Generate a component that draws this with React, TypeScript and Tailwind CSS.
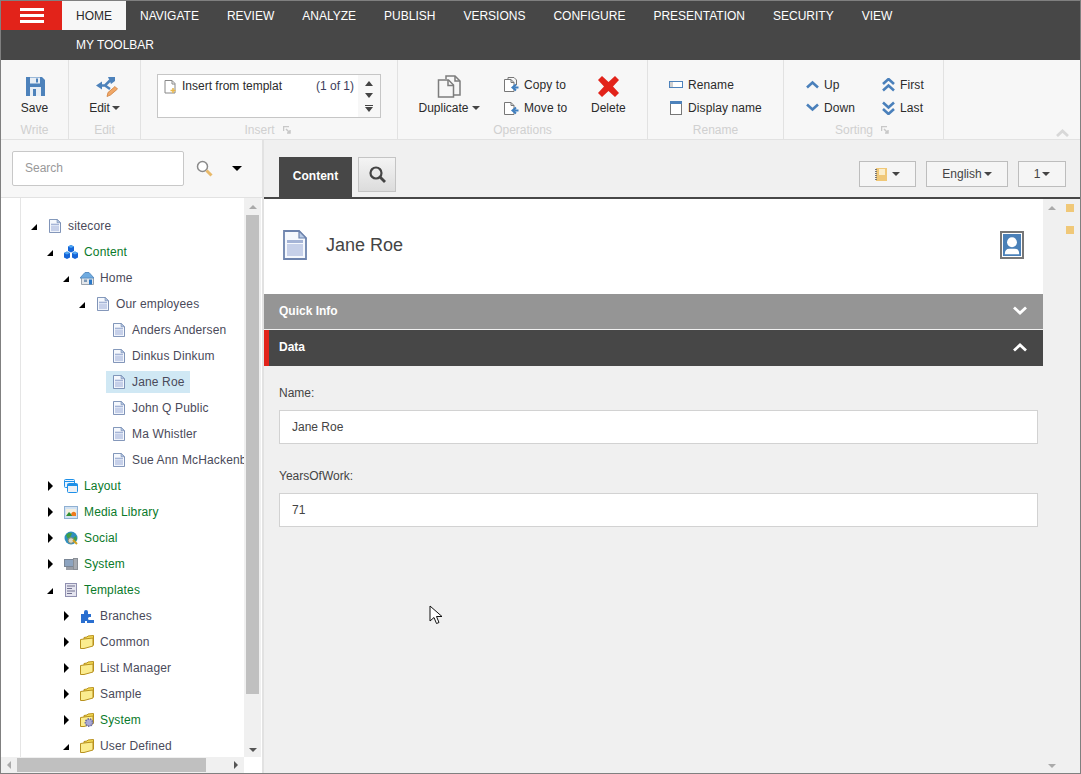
import type { ReactNode } from "react";

const tabs = ["NAVIGATE", "REVIEW", "ANALYZE", "PUBLISH", "VERSIONS", "CONFIGURE", "PRESENTATION", "SECURITY", "VIEW"];

type IconName = "doc" | "cubes" | "home" | "layout" | "media" | "globe" | "system" | "templates" | "puzzle" | "folder" | "folderGear";

type TreeRow = { label: string; level: number; icon: IconName; arrow?: "open" | "closed"; green?: boolean; selected?: boolean };

const tree: TreeRow[] = [
  { label: "sitecore", level: 0, icon: "doc", arrow: "open" },
  { label: "Content", level: 1, icon: "cubes", arrow: "open", green: true },
  { label: "Home", level: 2, icon: "home", arrow: "open" },
  { label: "Our employees", level: 3, icon: "doc", arrow: "open" },
  { label: "Anders Andersen", level: 4, icon: "doc" },
  { label: "Dinkus Dinkum", level: 4, icon: "doc" },
  { label: "Jane Roe", level: 4, icon: "doc", selected: true },
  { label: "John Q Public", level: 4, icon: "doc" },
  { label: "Ma Whistler", level: 4, icon: "doc" },
  { label: "Sue Ann McHackenb", level: 4, icon: "doc" },
  { label: "Layout", level: 1, icon: "layout", arrow: "closed", green: true },
  { label: "Media Library", level: 1, icon: "media", arrow: "closed", green: true },
  { label: "Social", level: 1, icon: "globe", arrow: "closed", green: true },
  { label: "System", level: 1, icon: "system", arrow: "closed", green: true },
  { label: "Templates", level: 1, icon: "templates", arrow: "open", green: true },
  { label: "Branches", level: 2, icon: "puzzle", arrow: "closed" },
  { label: "Common", level: 2, icon: "folder", arrow: "closed" },
  { label: "List Manager", level: 2, icon: "folder", arrow: "closed" },
  { label: "Sample", level: 2, icon: "folder", arrow: "closed" },
  { label: "System", level: 2, icon: "folderGear", arrow: "closed", green: true },
  { label: "User Defined", level: 2, icon: "folder", arrow: "open" },
];

function DocIcon({ width = 12, height = 14 }: { width?: number; height?: number }) {
  return (
    <svg width={width} height={height} viewBox="0 0 24 30" preserveAspectRatio="none" className="shrink-0">
      <path d="M1 1h15l7 7v21H1z" fill="#f5f8fd" stroke="#6d83ad" strokeWidth="1.800" />
      <path d="M16 1v7h7z" fill="#b9cbe6" stroke="#6d83ad" strokeWidth="1.200" />
      <rect x="4" y="10" width="16" height="3" fill="#a5b4d6" />
      <rect x="4" y="14" width="16" height="12" fill="#c6d0e9" />
    </svg>
  );
}

function TreeIcon({ name }: { name: IconName }) {
  if (name === "doc") return <DocIcon />;
  if (name === "cubes")
    return (
      <svg width="14" height="14" viewBox="0 0 14 14" className="shrink-0">
        <path d="M4 1.500L7 0l3 1.500V6L7 7.500 4 6z" fill="#1565d8" />
        <path d="M0 8l3-1.500L6 8v4.500L3 14l-3-1.500z" fill="#1565d8" />
        <path d="M8 8l3-1.500L14 8v4.500L11 14l-3-1.500z" fill="#1565d8" />
        <path d="M4 1.500L7 0l3 1.500L7 3zM0 8l3-1.500L6 8 3 9.500zM8 8l3-1.500L14 8l-3 1.500z" fill="#4fa6f2" />
      </svg>
    );
  if (name === "home")
    return (
      <svg width="14" height="14" viewBox="0 0 14 14" className="shrink-0">
        <path d="M1.500 6.500v7h12v-7z" fill="#e3e6ea" stroke="#9aa3ad" />
        <path d="M0 7l5-5.500h4L14 7z" fill="#6fabe0" stroke="#5a8fc4" />
        <rect x="9" y="8.500" width="3" height="5" fill="#2a78c8" />
        <rect x="4" y="8.500" width="3" height="2.500" fill="#7d9ab8" />
      </svg>
    );
  if (name === "layout")
    return (
      <svg width="14" height="14" viewBox="0 0 14 14" fill="#e9f3ff" stroke="#1e90e8" className="shrink-0">
        <rect x="0.500" y="0.500" width="10" height="8" rx="1" />
        <path d="M0.500 2.500h10" />
        <rect x="3.500" y="4.500" width="10" height="9" rx="1" fill="#eef1f6" />
        <path d="M3.500 6h10" strokeWidth="2" />
      </svg>
    );
  if (name === "media")
    return (
      <svg width="14" height="13" viewBox="0 0 14 13" className="shrink-0">
        <rect x="0.500" y="0.500" width="13" height="12" fill="#d2e2f3" stroke="#8fb0d2" />
        <rect x="2" y="3" width="10" height="7" fill="#f3efe0" />
        <path d="M2 10l3-4 4 4z" fill="#2f8f2f" />
        <path d="M7 8q2-4 5-1v3H8z" fill="#ee7a1c" />
      </svg>
    );
  if (name === "globe")
    return (
      <svg width="14" height="14" viewBox="0 0 14 14" className="shrink-0">
        <circle cx="7" cy="7" r="6.500" fill="#2f8fbf" />
        <path d="M2 4q3-3 6-2l-1 3-3 3zM9 7l3-2 1 3-3 3z" fill="#3f9f45" />
        <circle cx="7" cy="9.500" r="2.800" fill="#d9d9c6" stroke="#8c8c70" />
        <path d="M9 9l4 4" stroke="#d2a21e" strokeWidth="2" />
      </svg>
    );
  if (name === "system")
    return (
      <svg width="14" height="13" viewBox="0 0 14 13" className="shrink-0">
        <rect x="0.500" y="1.500" width="9" height="7" fill="#8da4c0" stroke="#7a8696" />
        <rect x="9.500" y="0.500" width="4" height="11" fill="#a7abb2" stroke="#8a8f96" />
        <rect x="2" y="9" width="7" height="3" fill="#9a9ea6" />
      </svg>
    );
  if (name === "templates")
    return (
      <svg width="12" height="14" viewBox="0 0 12 14" className="shrink-0">
        <rect x="0.500" y="0.500" width="11" height="13" fill="#e4e4ef" stroke="#9090b0" />
        <path d="M2 3h8M2 5.500h5M2 8h8M2 10.500h5" stroke="#70708f" />
      </svg>
    );
  if (name === "puzzle")
    return (
      <svg width="13" height="14" viewBox="0 0 13 14" className="shrink-0">
        <path d="M0 5h3V3a2 2 0 0 1 4 0v2h3v3H8.500a1.500 1.500 0 0 0 0 3H13v3H6v-2H4v2H0z" fill="#2a6fd0" />
      </svg>
    );
  return (
    <svg width="14" height="14" viewBox="0 0 14 14" className="shrink-0">
      <path d="M4 2.500l3-0.500 1-1 5.500-0.500V10L4 12z" fill="#f4dc56" stroke="#b8911e" />
      <path d="M0.500 4.500L4 4l9-1v8L4 13.500H0.500z" fill="#fbec8f" stroke="#b8911e" />
      {name === "folderGear" && <circle cx="9" cy="9.500" r="3.600" fill="#a9a9d6" stroke="#6a6aa0" strokeWidth="1.600" strokeDasharray="1.500 1" />}
    </svg>
  );
}

function TreeItem({ row }: { row: TreeRow }) {
  return (
    <div className="flex h-[26px] shrink-0 items-center whitespace-nowrap" style={{ paddingLeft: 8 + row.level * 16 }}>
      <span className="flex w-[10px] shrink-0 justify-center">
        {row.arrow === "open" && <span className="mt-[2px] h-0 w-0 border-b-[6px] border-l-[6px] border-b-black border-l-transparent" />}
        {row.arrow === "closed" && <span className="h-0 w-0 border-y-[5px] border-l-[5px] border-y-transparent border-l-black" />}
      </span>
      <span className={`ml-[3px] flex h-[22px] shrink-0 items-center pr-[5px] pl-[7px] ${row.selected ? "bg-[#d0e8f4]" : ""}`}>
        <span className="flex w-[12px] shrink-0 justify-center">
          <TreeIcon name={row.icon} />
        </span>
        <span className={`ml-[7px] text-[12px] tracking-[0.15px] ${row.green ? "text-[#0a7a2a]" : "text-[#4a4a5a]"}`}>{row.label}</span>
      </span>
    </div>
  );
}

function Caret({ color = "#444" }: { color?: string }) {
  return <span className="inline-block h-0 w-0 border-x-[4px] border-t-[4px] border-x-transparent align-middle" style={{ borderTopColor: color }} />;
}

function GroupLabel({ text, launcher }: { text: string; launcher?: boolean }) {
  return (
    <div className={`flex h-[20px] items-center justify-center pt-[1px] text-[12px] text-[#d0d0d0] ${launcher ? "gap-[8px] pr-[3px]" : ""}`}>
      <span>{text}</span>
      {launcher && (
        <svg width="8" height="8" viewBox="0 0 8 8" fill="none" stroke="#c8c8c8" strokeWidth="1.500">
          <path d="M0.500 5V0.500H6" />
          <path d="M3 3l4 4M7 4v3H4" />
        </svg>
      )}
    </div>
  );
}

function Group({ width, label, launcher, children }: { width: string; label: string; launcher?: boolean; children: ReactNode }) {
  return (
    <div className={`flex shrink-0 flex-col border-r border-[#e2e2e2] ${width}`}>
      <div className="h-[59px]">{children}</div>
      <GroupLabel text={label} launcher={launcher} />
    </div>
  );
}

function SmallAction({ icon, label }: { icon: ReactNode; label: string }) {
  return (
    <div className="flex h-[23px] items-center whitespace-nowrap text-[12px] tracking-[0.1px] text-[#2b2b2b]">
      <span className="flex w-[19px] shrink-0 justify-end">{icon}</span>
      <span className="ml-[5px]">{label}</span>
    </div>
  );
}

function Chevron({ double, down }: { double?: boolean; down?: boolean }) {
  return (
    <svg width="13" height={double ? 14 : 9} viewBox={double ? "0 0 13 14" : "0 0 13 9"} fill="none" stroke="#4a80bb" strokeWidth="2.600" className="shrink-0">
      {double ? (
        <g transform={down ? "translate(0 14) scale(1 -1)" : undefined}>
          <path d="M1 6l5.500-5 5.500 5M1 12.500l5.500-5 5.500 5" />
        </g>
      ) : (
        <path d={down ? "M1 1.500l5.500 5 5.500-5" : "M1 7.500l5.500-5 5.500 5"} />
      )}
    </svg>
  );
}

function PageArrowIcon({ copy }: { copy?: boolean }) {
  return (
    <svg width="16" height="15" viewBox="0 0 16 15" fill="none" className="shrink-0">
      {copy && <path d="M5 2V0.500h6l2.500 2.500v5" stroke="#777" />}
      <path d="M1.500 2.500h6.500l3 3v9h-9.500z" fill="#fff" stroke="#777" />
      <path d="M8 2.500v3h3" stroke="#777" />
      <path d="M15.500 10.500h-4M13 7.500l-3.500 3 3.500 3" stroke="#3f7fc0" strokeWidth="2" />
    </svg>
  );
}

function Ribbon() {
  return (
    <div className="flex h-[80px] shrink-0 border-b border-[#e2e2e2] bg-[#f7f7f7]">
      <Group width="w-[68px]" label="Write">
        <div className="flex flex-col items-center pt-[17px]">
          <svg width="19" height="19" viewBox="0 0 19 19" className="ml-[2px]">
            <path d="M0 0h16l3 3v16H0z" fill="#4d82bb" />
            <rect x="4" y="0.500" width="10" height="6" fill="#e8eef5" />
            <rect x="10" y="1.500" width="2" height="4" fill="#4d82bb" />
            <rect x="4" y="10" width="11" height="9" fill="#e8eef5" />
            <rect x="7" y="12" width="3" height="7" fill="#4d82bb" />
          </svg>
          <span className="mt-[4px] text-[12px] leading-[16px] text-[#2b2b2b]">Save</span>
        </div>
      </Group>
      <Group width="w-[72px]" label="Edit">
        <div className="flex flex-col items-center pt-[17px]">
          <svg width="22" height="20" viewBox="0 0 22 20" fill="none" className="ml-[5px]">
            <path d="M4 8.500h5l5-5M9 8.500l5 3.500" stroke="#4d82bb" strokeWidth="2.500" />
            <path d="M12 0h7v4l-4 3zM0 8.500l6-4v8z" fill="#4d82bb" />
            <path d="M11 19.500l1-4 7-6 2.500 2.500-7 6z" fill="#f0a868" stroke="#cf7f3c" strokeWidth="0.800" />
          </svg>
          <span className="mt-[3px] flex items-center gap-[2px] text-[12px] leading-[16px] text-[#2b2b2b]">
            Edit <Caret />
          </span>
        </div>
      </Group>
      <Group width="w-[257px]" label="Insert" launcher>
        <div className="pt-[14px] pl-[16px]">
          <div className="flex h-[44px] w-[224px] border border-[#c6c6c6] bg-white">
            <div className="flex min-w-0 flex-1 items-start pt-[5px] pl-[6px] text-[12px] leading-[13px] text-[#2b2b2b]">
              <svg width="13" height="14" viewBox="0 0 13 14" fill="none" className="shrink-0">
                <path d="M1 0.500h7l3 3V13H1z" fill="#fff" stroke="#888" />
                <path d="M8 0.500V4h3" stroke="#888" />
                <path d="M9 8v5M6.500 10.500h5" stroke="#e8b64a" strokeWidth="1.500" />
              </svg>
              <span className="ml-[5px] flex-1 whitespace-nowrap">Insert from templat</span>
              <span className="mr-[4px] whitespace-nowrap text-[#3d3d5c]">(1 of 1)</span>
            </div>
            <div className="flex w-[22px] flex-col items-center gap-[7px] bg-[#f7f7f7] pt-[6px]">
              <span className="h-0 w-0 border-x-[4px] border-b-[5px] border-x-transparent border-b-[#444]" />
              <span className="h-0 w-0 border-x-[4px] border-t-[5px] border-x-transparent border-t-[#444]" />
              <span className="flex flex-col items-center gap-[1px]">
                <span className="h-[1px] w-[8px] bg-[#444]" />
                <span className="h-0 w-0 border-x-[4px] border-t-[5px] border-x-transparent border-t-[#444]" />
              </span>
            </div>
          </div>
        </div>
      </Group>
      <Group width="w-[250px]" label="Operations">
        <div className="flex pt-[13px]">
          <div className="flex w-[99px] flex-col items-center pt-[2px] pl-[3px]">
            <svg width="24" height="23" viewBox="0 0 24 23" fill="none" stroke="#7d7d7d" strokeWidth="1.500" className="shrink-0">
              <path d="M9 4V1h9l5 5v14h-6" />
              <path d="M1.500 5h10l5 5v12h-15z" fill="#f7f7f7" />
              <path d="M11 5v5.500h5.500M18 1v5h5" />
            </svg>
            <span className="mt-[2px] flex items-center gap-[3px] text-[12px] leading-[16px] text-[#2b2b2b]">
              Duplicate <Caret />
            </span>
          </div>
          <div className="w-[94px] pl-[3px]">
            <SmallAction icon={<PageArrowIcon copy />} label="Copy to" />
            <SmallAction icon={<PageArrowIcon />} label="Move to" />
          </div>
          <div className="flex flex-col items-center pt-[3px]">
            <svg width="21" height="21" viewBox="0 0 21 21" className="shrink-0">
              <path d="M4 0l6.500 6L17 0l4 4-6 6.500 6 6.500-4 4-6.500-6L4 21l-4-4 6-6.500L0 4z" fill="#e2231a" />
            </svg>
            <span className="mt-[3px] text-[12px] leading-[16px] text-[#2b2b2b]">Delete</span>
          </div>
        </div>
      </Group>
      <Group width="w-[136px]" label="Rename">
        <div className="pt-[13px] pl-[16px]">
          <SmallAction
            icon={
              <svg width="14" height="7" viewBox="0 0 14 7" className="shrink-0">
                <rect x="0.500" y="0.500" width="13" height="6" fill="#fff" stroke="#4d82bb" />
                <rect x="1" y="1" width="3" height="5" fill="#d0d0d0" />
              </svg>
            }
            label="Rename"
          />
          <SmallAction
            icon={
              <svg width="12" height="14" viewBox="0 0 12 14" className="mr-[1px] shrink-0">
                <rect x="0.500" y="0.500" width="11" height="13" fill="#fff" stroke="#777" />
                <rect x="0" y="0" width="12" height="3" fill="#4d82bb" />
              </svg>
            }
            label="Display name"
          />
        </div>
      </Group>
      <Group width="w-[160px]" label="Sorting" launcher>
        <div className="grid grid-cols-[76px_1fr] pt-[13px] pl-[16px]">
          <SmallAction icon={<Chevron />} label="Up" />
          <SmallAction icon={<Chevron double />} label="First" />
          <SmallAction icon={<Chevron down />} label="Down" />
          <SmallAction icon={<Chevron double down />} label="Last" />
        </div>
      </Group>
      <div className="flex flex-1 items-end justify-end pr-[11px] pb-[2px]">
        <svg width="13" height="8" viewBox="0 0 13 8" fill="none" stroke="#d8d8d8" strokeWidth="2.800">
          <path d="M1 7l5.500-5 5.500 5" />
        </svg>
      </div>
    </div>
  );
}

function Magnifier() {
  return (
    <svg width="17" height="17" viewBox="0 0 17 17" fill="none">
      <circle cx="6.500" cy="6.500" r="5" fill="#fff" stroke="#8a8a8a" strokeWidth="1.500" />
      <path d="M10.500 10.500l5 5" stroke="#e8b96a" strokeWidth="3" />
    </svg>
  );
}

function LeftPanel() {
  return (
    <div className="flex w-[263px] shrink-0 flex-col border-r-2 border-[#e2e2e2] bg-white">
      <div className="flex h-[58px] shrink-0 items-center border-b border-[#e2e2e2] bg-[#f7f7f7] pl-[11px]">
        <div className="flex h-[35px] w-[172px] items-center rounded-[2px] border border-[#c8c8c8] bg-white pb-[1px] pl-[12px] text-[12px] text-[#999]">
          Search
        </div>
        <span className="ml-[12px] flex">
          <Magnifier />
        </span>
        <span className="ml-[19px] h-0 w-0 border-x-[5px] border-t-[5px] border-x-transparent border-t-black" />
      </div>
      <div className="flex min-h-0 flex-1 flex-col">
        <div className="flex min-h-0 flex-1">
          <div className="min-w-0 flex-1 overflow-hidden">
            <div className="ml-[19px] flex h-full flex-col overflow-hidden border-l border-[#e5e5e5] pt-[15px]">
              {tree.map((row, i) => (
                <TreeItem key={i} row={row} />
              ))}
            </div>
          </div>
          <div className="mr-[1px] flex w-[17px] shrink-0 flex-col items-center bg-[#f0f0f0]">
            <div className="flex h-[17px] shrink-0 items-center justify-center">
              <span className="h-0 w-0 border-x-[4px] border-b-[4px] border-x-transparent border-b-[#aaa]" />
            </div>
            <div className="h-[479px] w-[13px] bg-[#c0c0c0]" />
            <div className="flex flex-1 items-end pb-[5px]">
              <span className="h-0 w-0 border-x-[4px] border-t-[4px] border-x-transparent border-t-[#555]" />
            </div>
          </div>
        </div>
        <div className="flex h-[16px] shrink-0 items-center">
          <div className="flex h-full w-[243px] items-center bg-[#f0f0f0]">
            <div className="flex w-[16px] justify-center">
              <span className="h-0 w-0 border-y-[4px] border-r-[4px] border-y-transparent border-r-[#aaa]" />
            </div>
            <div className="h-[14px] w-[189px] bg-[#c0c0c0]" />
            <div className="flex flex-1 justify-end pr-[6px]">
              <span className="h-0 w-0 border-y-[4px] border-l-[4px] border-y-transparent border-l-[#555]" />
            </div>
          </div>
        </div>
      </div>
    </div>
  );
}

function ToolButton({ width, children }: { width: string; children: ReactNode }) {
  return (
    <div className={`flex h-[26px] items-center justify-center gap-[2px] border border-[#bdbdbd] bg-[#f5f5f5] text-[12px] text-[#444] ${width}`}>
      {children}
    </div>
  );
}

function Field({ label, value }: { label: string; value: string }) {
  return (
    <div>
      <div className="flex h-[16px] items-center text-[12px] text-[#444]">{label}</div>
      <div className="mt-[9px] flex h-[34px] items-center border border-[#d2d2d2] bg-white pl-[12px] text-[12px] text-[#444]">{value}</div>
    </div>
  );
}

function RightPanel() {
  return (
    <div className="relative flex min-w-0 flex-1 flex-col bg-[#f0f0f0]">
      <div className="flex h-[57px] shrink-0 pl-[15px]">
        <div className="mt-[17px] flex h-[40px] w-[73px] items-center justify-center bg-[#474747] pb-[2px] text-[12px] font-bold text-white">Content</div>
        <div className="mt-[17px] ml-[6px] flex h-[35px] w-[38px] items-center justify-center border border-[#c4c4c4] bg-gradient-to-b from-[#f4f4f4] to-[#dcdcdc]">
          <svg width="17" height="17" viewBox="0 0 17 17" fill="none" stroke="#444" strokeWidth="2.200">
            <circle cx="7" cy="7" r="5.500" />
            <path d="M11 11l5 5" strokeWidth="2.800" />
          </svg>
        </div>
        <div className="mt-[21px] mr-[14px] ml-auto flex gap-[10px]">
          <ToolButton width="w-[57px]">
            <svg width="12" height="13" viewBox="0 0 12 13" className="mr-[3px] shrink-0">
              <rect x="1" y="0" width="11" height="13" fill="#f0c878" />
              <rect x="4" y="1" width="6" height="6" fill="#fbeecb" />
              <path d="M0 1.500h2M0 3.500h2M0 5.500h2M0 7.500h2M0 9.500h2M0 11.500h2" stroke="#777" />
            </svg>
            <Caret />
          </ToolButton>
          <ToolButton width="w-[82px]">
            English
            <Caret />
          </ToolButton>
          <ToolButton width="w-[48px]">
            1
            <Caret />
          </ToolButton>
        </div>
      </div>
      <div className="h-[2px] shrink-0 bg-[#474747]" />
      <div className="flex min-h-0 flex-1">
        <div className="w-[779px] shrink-0">
          <div className="flex h-[95px] items-center bg-white pr-[19px] pb-[3px] pl-[19px]">
            <DocIcon width={24} height={30} />
            <span className="ml-[19px] text-[18px] text-[#444]">Jane Roe</span>
            <div className="ml-auto flex h-[28px] w-[24px] items-center justify-center border-2 border-[#777] bg-white p-[1px]">
              <svg viewBox="0 0 20 24" className="h-full w-full" preserveAspectRatio="none">
                <rect width="20" height="24" fill="#4a80b8" />
                <circle cx="10" cy="9" r="5.500" fill="#fff" />
                <path d="M2 22q0-6 5-6h6q5 0 5 6z" fill="#fff" />
              </svg>
            </div>
          </div>
          <div className="flex h-[35px] items-center justify-between bg-[#959595] pr-[16px] pb-[2px] pl-[15px] text-[12px] font-bold text-white">
            Quick Info
            <svg width="14" height="9" viewBox="0 0 14 9" fill="none" stroke="#fff" strokeWidth="2.800">
              <path d="M1 1.500l6 5.500 6-5.500" />
            </svg>
          </div>
          <div className="mt-[1px] flex h-[36px] items-center justify-between border-l-[5px] border-[#e2231a] bg-[#474747] pr-[16px] pb-[2px] pl-[10px] text-[12px] font-bold text-white">
            Data
            <svg width="14" height="9" viewBox="0 0 14 9" fill="none" stroke="#fff" strokeWidth="2.800">
              <path d="M1 7.500l6-5.500 6 5.500" />
            </svg>
          </div>
          <div className="flex flex-col gap-[24px] pt-[19px] pr-[5px] pl-[15px]">
            <Field label="Name:" value="Jane Roe" />
            <Field label="YearsOfWork:" value="71" />
          </div>
        </div>
        <div className="flex w-[18px] shrink-0 flex-col items-center justify-between pt-[7px] pb-[5px]">
          <span className="h-0 w-0 border-x-[4px] border-b-[4px] border-x-transparent border-b-[#aaa]" />
          <span className="h-0 w-0 border-x-[4px] border-t-[4px] border-x-transparent border-t-[#aaa]" />
        </div>
        <div className="flex flex-col items-center gap-[14px] pt-[5px] pl-[5px]">
          <span className="h-[8px] w-[8px] bg-[#f0c878]" />
          <span className="h-[8px] w-[8px] bg-[#f0c878]" />
        </div>
      </div>
      {/* mouse pointer left in the capture */}
      <svg width="14" height="20" viewBox="0 0 14 20" className="absolute top-[465px] left-[165px]">
        <path d="M1 1v15l4-3.500 2.500 6 2.500-1-2.500-6H13z" fill="#fff" stroke="#111" />
      </svg>
    </div>
  );
}

export default function App() {
  return (
    <div className="flex h-[774px] w-[1081px] flex-col overflow-hidden border border-[#808080] font-['Liberation_Sans',Arial,sans-serif]">
      <div className="h-[59px] shrink-0 bg-[#474747]">
        <div className="flex h-[29px] text-[12px] text-white">
          <div className="flex w-[61px] items-center justify-center bg-[#e2231a]">
            <div className="flex flex-col gap-[3px]">
              <span className="block h-[3px] w-[24px] bg-white" />
              <span className="block h-[3px] w-[24px] bg-white" />
              <span className="block h-[3px] w-[24px] bg-white" />
            </div>
          </div>
          <div className="flex w-[64px] items-center justify-center bg-[#f7f7f7] text-[#2b2b2b]">HOME</div>
          {tabs.map((tab) => (
            <div key={tab} className="flex items-center px-[14px]">
              {tab}
            </div>
          ))}
        </div>
        <div className="flex h-[30px] items-center pl-[75px] text-[12px] text-white">MY TOOLBAR</div>
      </div>
      <Ribbon />
      <div className="flex min-h-0 flex-1">
        <LeftPanel />
        <RightPanel />
      </div>
    </div>
  );
}
